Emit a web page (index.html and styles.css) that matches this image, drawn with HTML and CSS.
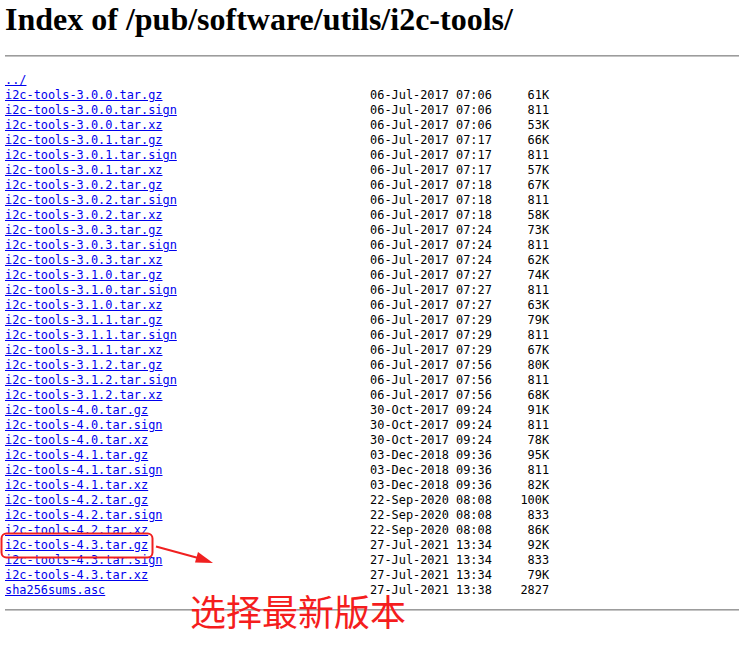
FILE: index.html
```html
<!DOCTYPE html>
<html>
<head>
<meta charset="utf-8">
<title>Index of /pub/software/utils/i2c-tools/</title>
<link rel="stylesheet" href="styles.css">
</head>
<body>
<h1 class="title">Index of /pub/software/utils/i2c-tools/</h1>
<hr class="rule">
<div class="listing">
<div class="row"><a href="#">../</a></div>
<div class="row"><span class="n"><a href="#">i2c-tools-3.0.0.tar.gz</a></span><span class="d">06-Jul-2017 07:06</span><span class="s">61K</span></div>
<div class="row"><span class="n"><a href="#">i2c-tools-3.0.0.tar.sign</a></span><span class="d">06-Jul-2017 07:06</span><span class="s">811</span></div>
<div class="row"><span class="n"><a href="#">i2c-tools-3.0.0.tar.xz</a></span><span class="d">06-Jul-2017 07:06</span><span class="s">53K</span></div>
<div class="row"><span class="n"><a href="#">i2c-tools-3.0.1.tar.gz</a></span><span class="d">06-Jul-2017 07:17</span><span class="s">66K</span></div>
<div class="row"><span class="n"><a href="#">i2c-tools-3.0.1.tar.sign</a></span><span class="d">06-Jul-2017 07:17</span><span class="s">811</span></div>
<div class="row"><span class="n"><a href="#">i2c-tools-3.0.1.tar.xz</a></span><span class="d">06-Jul-2017 07:17</span><span class="s">57K</span></div>
<div class="row"><span class="n"><a href="#">i2c-tools-3.0.2.tar.gz</a></span><span class="d">06-Jul-2017 07:18</span><span class="s">67K</span></div>
<div class="row"><span class="n"><a href="#">i2c-tools-3.0.2.tar.sign</a></span><span class="d">06-Jul-2017 07:18</span><span class="s">811</span></div>
<div class="row"><span class="n"><a href="#">i2c-tools-3.0.2.tar.xz</a></span><span class="d">06-Jul-2017 07:18</span><span class="s">58K</span></div>
<div class="row"><span class="n"><a href="#">i2c-tools-3.0.3.tar.gz</a></span><span class="d">06-Jul-2017 07:24</span><span class="s">73K</span></div>
<div class="row"><span class="n"><a href="#">i2c-tools-3.0.3.tar.sign</a></span><span class="d">06-Jul-2017 07:24</span><span class="s">811</span></div>
<div class="row"><span class="n"><a href="#">i2c-tools-3.0.3.tar.xz</a></span><span class="d">06-Jul-2017 07:24</span><span class="s">62K</span></div>
<div class="row"><span class="n"><a href="#">i2c-tools-3.1.0.tar.gz</a></span><span class="d">06-Jul-2017 07:27</span><span class="s">74K</span></div>
<div class="row"><span class="n"><a href="#">i2c-tools-3.1.0.tar.sign</a></span><span class="d">06-Jul-2017 07:27</span><span class="s">811</span></div>
<div class="row"><span class="n"><a href="#">i2c-tools-3.1.0.tar.xz</a></span><span class="d">06-Jul-2017 07:27</span><span class="s">63K</span></div>
<div class="row"><span class="n"><a href="#">i2c-tools-3.1.1.tar.gz</a></span><span class="d">06-Jul-2017 07:29</span><span class="s">79K</span></div>
<div class="row"><span class="n"><a href="#">i2c-tools-3.1.1.tar.sign</a></span><span class="d">06-Jul-2017 07:29</span><span class="s">811</span></div>
<div class="row"><span class="n"><a href="#">i2c-tools-3.1.1.tar.xz</a></span><span class="d">06-Jul-2017 07:29</span><span class="s">67K</span></div>
<div class="row"><span class="n"><a href="#">i2c-tools-3.1.2.tar.gz</a></span><span class="d">06-Jul-2017 07:56</span><span class="s">80K</span></div>
<div class="row"><span class="n"><a href="#">i2c-tools-3.1.2.tar.sign</a></span><span class="d">06-Jul-2017 07:56</span><span class="s">811</span></div>
<div class="row"><span class="n"><a href="#">i2c-tools-3.1.2.tar.xz</a></span><span class="d">06-Jul-2017 07:56</span><span class="s">68K</span></div>
<div class="row"><span class="n"><a href="#">i2c-tools-4.0.tar.gz</a></span><span class="d">30-Oct-2017 09:24</span><span class="s">91K</span></div>
<div class="row"><span class="n"><a href="#">i2c-tools-4.0.tar.sign</a></span><span class="d">30-Oct-2017 09:24</span><span class="s">811</span></div>
<div class="row"><span class="n"><a href="#">i2c-tools-4.0.tar.xz</a></span><span class="d">30-Oct-2017 09:24</span><span class="s">78K</span></div>
<div class="row"><span class="n"><a href="#">i2c-tools-4.1.tar.gz</a></span><span class="d">03-Dec-2018 09:36</span><span class="s">95K</span></div>
<div class="row"><span class="n"><a href="#">i2c-tools-4.1.tar.sign</a></span><span class="d">03-Dec-2018 09:36</span><span class="s">811</span></div>
<div class="row"><span class="n"><a href="#">i2c-tools-4.1.tar.xz</a></span><span class="d">03-Dec-2018 09:36</span><span class="s">82K</span></div>
<div class="row"><span class="n"><a href="#">i2c-tools-4.2.tar.gz</a></span><span class="d">22-Sep-2020 08:08</span><span class="s">100K</span></div>
<div class="row"><span class="n"><a href="#">i2c-tools-4.2.tar.sign</a></span><span class="d">22-Sep-2020 08:08</span><span class="s">833</span></div>
<div class="row"><span class="n"><a href="#">i2c-tools-4.2.tar.xz</a></span><span class="d">22-Sep-2020 08:08</span><span class="s">86K</span></div>
<div class="row"><span class="n"><a href="#">i2c-tools-4.3.tar.gz</a></span><span class="d">27-Jul-2021 13:34</span><span class="s">92K</span></div>
<div class="row"><span class="n"><a href="#">i2c-tools-4.3.tar.sign</a></span><span class="d">27-Jul-2021 13:34</span><span class="s">833</span></div>
<div class="row"><span class="n"><a href="#">i2c-tools-4.3.tar.xz</a></span><span class="d">27-Jul-2021 13:34</span><span class="s">79K</span></div>
<div class="row"><span class="n"><a href="#">sha256sums.asc</a></span><span class="d">27-Jul-2021 13:38</span><span class="s">2827</span></div>
</div>
<hr class="rule rule-bottom">

<svg class="annot" width="739" height="649" viewBox="0 0 739 649" aria-hidden="true">
  <rect x="1.5" y="533.5" width="151" height="24" rx="5" ry="5" fill="none" stroke="#f02020" stroke-width="2"/>
  <line x1="156" y1="546.5" x2="200" y2="558.5" stroke="#f02020" stroke-width="2"/>
  <polygon points="213,563 195,562.5 198,552" fill="#f02020"/>
</svg>
<div class="note">选择最新版本</div>
</body>
</html>
```

FILE: styles.css
```css
html, body {
  margin: 0;
  padding: 0;
  background: #ffffff;
}

body {
  position: relative;
  padding: 0 0 0 5px;
  width: 734px;
  height: 649px;
  overflow: hidden;
  font-family: "Liberation Serif", serif;
  color: #000;
}

.title {
  font-family: "Liberation Serif", serif;
  font-weight: bold;
  font-size: 32px;
  line-height: 36px;
  margin: 0;
  padding-top: 1px;
  white-space: nowrap;
}

.rule {
  margin: 18px 0 0 0;
  height: 0;
  border: 0;
  border-top: 1px solid #9c9c9c;
  border-bottom: 1px solid #c4c4c4;
}

.listing {
  margin-top: 16px;
  font-family: "DejaVu Sans Mono", monospace;
  font-size: 11.9px;
  line-height: 15px;
  white-space: nowrap;
}

.row {
  height: 15px;
}

.listing a {
  color: #0000ee;
  text-decoration: underline;
}

.n {
  display: inline-block;
  width: 51ch;
}

.s {
  display: inline-block;
  width: 8ch;
  text-align: right;
}

.rule-bottom {
  margin-top: 11px;
}

.annot {
  position: absolute;
  left: 0;
  top: 0;
  pointer-events: none;
}

.note {
  position: absolute;
  left: 190px;
  top: 588px;
  font-family: "Noto Sans CJK SC", sans-serif;
  font-size: 36px;
  line-height: 44px;
  color: #f51d1d;
  white-space: nowrap;
}
```
